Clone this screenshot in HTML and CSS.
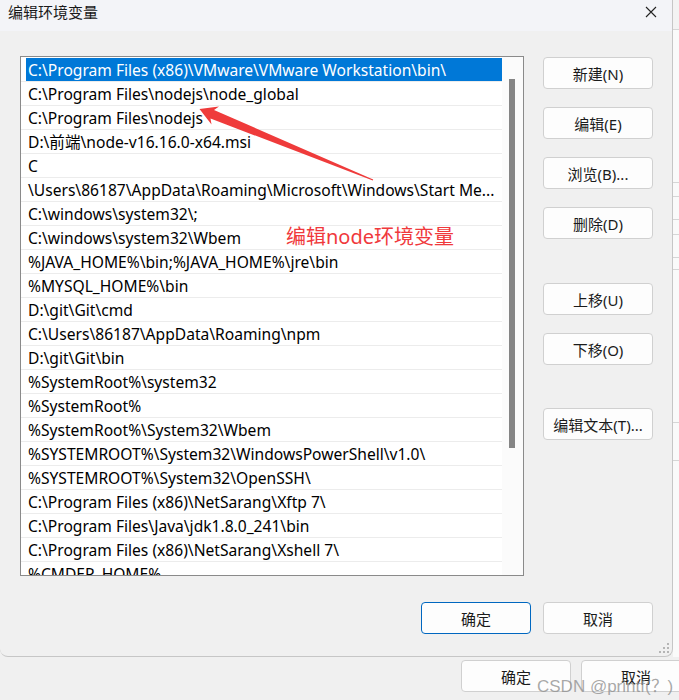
FILE: index.html
```html
<!DOCTYPE html>
<html lang="zh-CN">
<head>
<meta charset="utf-8">
<title>编辑环境变量</title>
<link rel="stylesheet" href="styles.css">
</head>
<body>
<div class="screen">
  <div class="dialog">
    <div class="titlebar">
      <span class="title">编辑环境变量</span>
      <svg class="close" width="12" height="12" viewBox="0 0 12 12"><path d="M1 1L11 11M11 1L1 11" stroke="#222" stroke-width="1.1" fill="none"/></svg>
    </div>
    <div class="content">
      <div class="main">
        <div class="listbox">
          <div class="rows">
            <div class="row selected"><span class="label">C:\Program Files (x86)\VMware\VMware Workstation\bin\</span></div>
            <div class="row"><span class="label">C:\Program Files\nodejs\node_global</span></div>
            <div class="row"><span class="label">C:\Program Files\nodejs</span></div>
            <div class="row"><span class="label">D:\前端\node-v16.16.0-x64.msi</span></div>
            <div class="row"><span class="label">C</span></div>
            <div class="row"><span class="label">\Users\86187\AppData\Roaming\Microsoft\Windows\Start Me...</span></div>
            <div class="row"><span class="label">C:\windows\system32\;</span></div>
            <div class="row"><span class="label">C:\windows\system32\Wbem</span></div>
            <div class="row"><span class="label">%JAVA_HOME%\bin;%JAVA_HOME%\jre\bin</span></div>
            <div class="row"><span class="label">%MYSQL_HOME%\bin</span></div>
            <div class="row"><span class="label">D:\git\Git\cmd</span></div>
            <div class="row"><span class="label">C:\Users\86187\AppData\Roaming\npm</span></div>
            <div class="row"><span class="label">D:\git\Git\bin</span></div>
            <div class="row"><span class="label">%SystemRoot%\system32</span></div>
            <div class="row"><span class="label">%SystemRoot%</span></div>
            <div class="row"><span class="label">%SystemRoot%\System32\Wbem</span></div>
            <div class="row"><span class="label">%SYSTEMROOT%\System32\WindowsPowerShell\v1.0\</span></div>
            <div class="row"><span class="label">%SYSTEMROOT%\System32\OpenSSH\</span></div>
            <div class="row"><span class="label">C:\Program Files (x86)\NetSarang\Xftp 7\</span></div>
            <div class="row"><span class="label">C:\Program Files\Java\jdk1.8.0_241\bin</span></div>
            <div class="row"><span class="label">C:\Program Files (x86)\NetSarang\Xshell 7\</span></div>
            <div class="row"><span class="label">%CMDER_HOME%</span></div>
          </div>
          <div class="scrollbar"><div class="thumb"></div></div>
        </div>
        <div class="side">
          <div class="group">
            <button class="btn">新建(N)</button>
            <button class="btn">编辑(E)</button>
            <button class="btn">浏览(B)...</button>
            <button class="btn">删除(D)</button>
          </div>
          <div class="group g2">
            <button class="btn">上移(U)</button>
            <button class="btn">下移(O)</button>
          </div>
          <div class="group g3">
            <button class="btn">编辑文本(T)...</button>
          </div>
        </div>
      </div>
      <div class="footer">
        <button class="btn default">确定</button>
        <button class="btn">取消</button>
      </div>
    </div>
    <svg class="grip" width="12" height="12" viewBox="0 0 12 12">
      <rect x="9" y="1" width="2" height="2" fill="#b5b5b5"/>
      <rect x="5" y="5" width="2" height="2" fill="#b5b5b5"/>
      <rect x="9" y="5" width="2" height="2" fill="#b5b5b5"/>
      <rect x="1" y="9" width="2" height="2" fill="#b5b5b5"/>
      <rect x="5" y="9" width="2" height="2" fill="#b5b5b5"/>
      <rect x="9" y="9" width="2" height="2" fill="#b5b5b5"/>
    </svg>
  </div>
  <div class="strip">
    <div class="seg s1"></div>
    <div class="seg s2"></div>
    <div class="seg s3"></div>
    <div class="seg s4"></div>
    <div class="seg s5"></div>
    <div class="seg s6"></div>
    <div class="seg s7"></div>
    <div class="seg s8"></div>
    <div class="seg s9"></div>
  </div>
  <div class="back">
    <button class="btn">确定</button>
    <button class="btn">取消</button>
  </div>
  <svg class="arrow" width="679" height="700" viewBox="0 0 679 700">
    <polygon points="199.5,109 219,106.5 214,110 373.2,179.5 372.8,180.5 210.5,118.5 211.5,124.5" fill="#ef3b3b"/>
  </svg>
  <div class="note">编辑node环境变量</div>
  <div class="watermark">CSDN @printf(？)</div>
</div>
</body>
</html>
```
FILE: styles.css
```css
* { box-sizing: border-box; }
body {
  margin: 0;
  background: #f0f0f0;
  font-family: "Noto Sans", "Noto Sans CJK SC", sans-serif;
}
.screen {
  position: relative;
  width: 679px;
  height: 700px;
  overflow: hidden;
  display: grid;
  grid-template-columns: 673px 6px;
  grid-template-rows: 657px 43px;
  grid-template-areas: "dialog strip" "back back";
}
.dialog {
  grid-area: dialog;
  position: relative;
  background: #f0f0f0;
  border-right: 1px solid #c6c6c6;
  border-bottom: 1px solid #c6c6c6;
  border-radius: 0 0 8px 8px;
  display: flex;
  flex-direction: column;
}
.titlebar {
  height: 31px;
  flex: none;
  background: #f3f4f8;
  display: flex;
  align-items: flex-start;
  justify-content: space-between;
  padding: 0 15px 0 8px;
}
.title {
  font-family: "Noto Sans CJK SC", sans-serif;
  font-size: 15px;
  line-height: 24px;
  color: #1a1a1a;
}
.close { margin-top: 6px; }
.content {
  flex: 1;
  padding: 25px 19px 0 20px;
  display: flex;
  flex-direction: column;
}
.main { display: flex; }
.listbox {
  width: 504px;
  height: 520px;
  border: 1px solid #8a8a8a;
  background: #fff;
  display: flex;
  overflow: hidden;
}
.rows {
  flex: 1;
  padding-top: 1px;
  overflow: hidden;
}
.row {
  height: 24px;
  border-bottom: 1px solid #ececec;
  padding-left: 5px;
}
.label {
  display: block;
  height: 23px;
  line-height: 25px;
  padding-left: 2px;
  font-size: 15.6px;
  color: #000;
  white-space: nowrap;
  overflow: hidden;
}
.row.selected .label {
  background: #0078d7;
  color: #fff;
}
.scrollbar {
  width: 21px;
  flex: none;
  background: #fbfbfb;
  padding: 22px 0 0 7px;
}
.thumb {
  width: 6px;
  height: 369px;
  background: #858585;
}
.side {
  margin-left: 19px;
  padding-top: 1px;
  display: flex;
  flex-direction: column;
}
.group {
  display: flex;
  flex-direction: column;
  gap: 18px;
}
.g2 { margin-top: 44px; }
.g3 { margin-top: 43px; }
.btn {
  width: 110px;
  height: 32px;
  flex: none;
  border: 1px solid #d0d0d0;
  border-radius: 4px;
  background: #fdfdfd;
  font-family: "Noto Sans", "Noto Sans CJK SC", sans-serif;
  font-size: 15px;
  color: #1b1b1b;
  padding: 0;
  display: flex;
  align-items: center;
  justify-content: center;
}
.btn.default { border-color: #0067c0; }
.footer {
  display: flex;
  justify-content: flex-end;
  gap: 12px;
  margin-top: 26px;
}
.grip {
  position: absolute;
  right: 2px;
  bottom: 2px;
}
.strip {
  grid-area: strip;
  background: #fafafa;
  display: flex;
  flex-direction: column;
}
.seg { flex: none; border-bottom: 1px solid #d6d6d6; }
.s1 { height: 30px; background: #f3f3f3; }
.s2 { height: 153px; }
.s3 { height: 14px; }
.s4 { height: 23px; }
.s5 { height: 15px; }
.s6 { height: 23px; }
.s7 { height: 12px; }
.s8 { height: 153px; }
.s9 { height: 38px; }
.back {
  grid-area: back;
  display: flex;
  gap: 10px;
  padding: 3px 0 0 461px;
  overflow: hidden;
}
.arrow {
  position: absolute;
  left: 0;
  top: 0;
  pointer-events: none;
}
.note {
  position: absolute;
  left: 286px;
  top: 225px;
  font-family: "Noto Sans", "Noto Sans CJK SC", sans-serif;
  font-size: 20px;
  line-height: 24px;
  color: #f0393c;
  white-space: nowrap;
}
.watermark {
  position: absolute;
  left: 537px;
  top: 672px;
  font-family: "Liberation Sans", sans-serif;
  font-size: 17px;
  color: rgba(140, 140, 140, 0.75);
  white-space: nowrap;
}
```
